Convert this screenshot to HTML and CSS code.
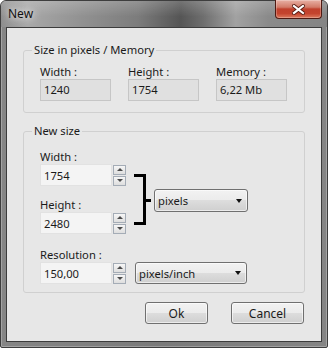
FILE: index.html
```html
<!DOCTYPE html>
<html lang="en">
<head>
    <meta charset="UTF-8">
    <meta name="viewport" content="width=device-width, initial-scale=1.0">
    <title>New</title>
    <link rel="stylesheet" href="styles.css">
</head>
<body>
    <div class="window">
        <div class="titlebar">
            <span class="title">New</span>
            <button class="close" title="Close">
                <svg width="13" height="11" viewBox="0 0 13 11">
                    <path d="M2 2 L11 9 M11 2 L2 9" stroke="#5a1c12" stroke-width="4" stroke-linecap="square"/>
                    <path d="M2 2 L11 9 M11 2 L2 9" stroke="#ffffff" stroke-width="2.2" stroke-linecap="square"/>
                </svg>
            </button>
        </div>

        <div class="client">
            <fieldset class="group info">
                <legend>Size in pixels / Memory</legend>
                <div class="info-grid">
                    <div class="cell">
                        <label>Width :</label>
                        <div class="readout">1240</div>
                    </div>
                    <div class="cell">
                        <label>Height :</label>
                        <div class="readout">1754</div>
                    </div>
                    <div class="cell">
                        <label>Memory :</label>
                        <div class="readout">6,22 Mb</div>
                    </div>
                </div>
            </fieldset>

            <fieldset class="group resize">
                <legend>New size</legend>
                <div class="linked">
                    <div class="dims">
                        <div class="field">
                            <label>Width :</label>
                            <div class="spin">
                                <input type="text" value="1754">
                                <div class="spin-btns">
                                    <span class="spin-btn up"></span>
                                    <span class="spin-btn down"></span>
                                </div>
                            </div>
                        </div>
                        <div class="field">
                            <label>Height :</label>
                            <div class="spin">
                                <input type="text" value="2480">
                                <div class="spin-btns">
                                    <span class="spin-btn up"></span>
                                    <span class="spin-btn down"></span>
                                </div>
                            </div>
                        </div>
                    </div>
                    <svg class="bracket" width="17" height="84" viewBox="0 0 17 84">
                        <path d="M0 24 H12 V75 H0 V72 H9 V27 H0 Z" fill="#000"/>
                        <rect x="12" y="49" width="5" height="3" fill="#000"/>
                    </svg>
                    <div class="select unit">
                        <span>pixels</span>
                        <span class="caret"></span>
                    </div>
                </div>

                <div class="field res">
                    <label>Resolution :</label>
                    <div class="res-row">
                        <div class="spin">
                            <input type="text" value="150,00">
                            <div class="spin-btns">
                                <span class="spin-btn up"></span>
                                <span class="spin-btn down"></span>
                            </div>
                        </div>
                        <div class="select res-unit">
                            <span>pixels/inch</span>
                            <span class="caret"></span>
                        </div>
                    </div>
                </div>
            </fieldset>

            <div class="actions">
                <button class="button ok">Ok</button>
                <button class="button cancel">Cancel</button>
            </div>
        </div>
    </div>
</body>
</html>
```

FILE: styles.css
```css
body {
    margin: 0;
    background: #ffffff;
    font-family: 'Noto Sans', 'Open Sans', sans-serif;
    font-size: 11.2px;
    color: #1a1a1a;
}
.window {
    width: 326px;
    height: 346px;
    display: flex;
    flex-direction: column;
    border: 1px solid #3e3e3e;
    border-radius: 6px 6px 2px 2px;
    background: linear-gradient(to right, #868686, #7a7a7a 50%, #858585);
    box-shadow: inset 0 0 0 1px rgba(255, 255, 255, 0.25);
}
.titlebar {
    height: 26px;
    display: flex;
    align-items: flex-start;
    padding: 0 5px 0 7px;
    border-radius: 5px 5px 0 0;
    background:
        linear-gradient(to bottom, rgba(255, 255, 255, 0.18), rgba(255, 255, 255, 0) 60%),
        linear-gradient(to right, #8e8e8e 0%, #a8a8a8 8%, #919191 25%, #7c7c7c 42%, #555555 55%, #6e6e6e 62%, #a2a2a2 72%, #8a8a8a 82%, #858585 100%);
}
.title {
    line-height: 26px;
    font-size: 12px;
    color: #111;
    text-shadow: 0 0 6px rgba(255, 255, 255, 0.9), 0 0 12px rgba(255, 255, 255, 0.7);
}
.close {
    margin-left: auto;
    margin-top: -1px;
    width: 47px;
    height: 19px;
    padding: 0;
    display: flex;
    align-items: center;
    justify-content: center;
    border: 1px solid #4f1a12;
    border-top: none;
    border-radius: 0 0 4px 4px;
    background: linear-gradient(to bottom, #e8b0a4 0%, #d27a68 40%, #c0402c 50%, #c4442e 75%, #dc7a5e 100%);
    box-shadow: inset 0 0 0 1px rgba(255, 255, 255, 0.25);
}
.client {
    flex: 1;
    margin: 0 5px 5px;
    border: 1px solid #3c3c3c;
    background: #e7e7e7;
    padding: 0 16px;
    display: flex;
    flex-direction: column;
}
.group {
    margin: 0;
    min-width: 0;
    border: 1px solid #d0d0d0;
    border-radius: 3px;
    padding: 0 16px;
}
.group legend {
    margin-left: -8px;
    padding: 0 2px;
    line-height: 14px;
}
.info {
    margin-top: 15px;
    padding-top: 8px;
    padding-bottom: 11px;
}
.resize {
    margin-top: 11px;
    padding-top: 12px;
    padding-bottom: 8px;
}
label {
    display: block;
    line-height: 14px;
}
.info-grid {
    display: grid;
    grid-template-columns: 71px 71px 71px;
    column-gap: 17px;
}
.readout {
    height: 20px;
    line-height: 20px;
    padding-left: 3px;
    border: 1px solid #c6c6c6;
    background: #e0e0e0;
}
.linked {
    display: flex;
    align-items: flex-start;
}
.dims {
    display: flex;
    flex-direction: column;
    gap: 12px;
}
.spin {
    display: flex;
    align-items: center;
    gap: 1px;
    width: 87px;
    height: 22px;
}
.spin input {
    width: 72px;
    height: 22px;
    box-sizing: border-box;
    margin: 0;
    padding: 0 3px;
    border: 1px solid #e2e2e2;
    background: #f4f4f4;
    font: inherit;
    color: #1a1a1a;
    outline: none;
}
.spin-btns {
    display: flex;
    flex-direction: column;
    gap: 1px;
}
.spin-btn {
    width: 11px;
    height: 8px;
    display: flex;
    align-items: center;
    justify-content: center;
    border: 1px solid #a4acb6;
    background: linear-gradient(to bottom, #f6f6f6, #dedede);
}
.spin-btn::after {
    content: "";
    border-left: 3px solid transparent;
    border-right: 3px solid transparent;
}
.spin-btn.up::after {
    border-bottom: 3px solid #4a4a4a;
}
.spin-btn.down::after {
    border-top: 3px solid #4a4a4a;
}
.bracket {
    margin-left: 7px;
    flex-shrink: 0;
}
.select {
    height: 21px;
    box-sizing: content-box;
    display: flex;
    align-items: center;
    justify-content: space-between;
    padding: 0 5px 0 3px;
    border: 1px solid #707070;
    border-radius: 3px;
    background: linear-gradient(to bottom, #f2f2f2 0%, #ebebeb 50%, #dddddd 50%, #cfcfcf 100%);
    box-shadow: inset 0 0 0 1px rgba(255, 255, 255, 0.6);
}
.unit {
    width: 84px;
    margin-left: 3px;
    margin-top: 39px;
}
.res {
    margin-top: 14px;
}
.res-row {
    display: flex;
    align-items: center;
}
.res-unit {
    width: 102px;
    height: 20px;
    margin-left: 8px;
}
.caret {
    border-left: 3.5px solid transparent;
    border-right: 3.5px solid transparent;
    border-top: 4px solid #111;
}
.actions {
    display: flex;
    justify-content: flex-end;
    gap: 23px;
    margin-top: 9px;
    margin-right: 1px;
}
.button {
    height: 22px;
    padding: 0;
    border: 1px solid #707070;
    border-radius: 3px;
    background: linear-gradient(to bottom, #f2f2f2 0%, #ebebeb 50%, #dddddd 50%, #cfcfcf 100%);
    box-shadow: inset 0 0 0 1px rgba(255, 255, 255, 0.6);
    font: inherit;
    font-size: 12px;
    color: #1a1a1a;
}
.ok {
    width: 63px;
}
.cancel {
    width: 73px;
}
```
